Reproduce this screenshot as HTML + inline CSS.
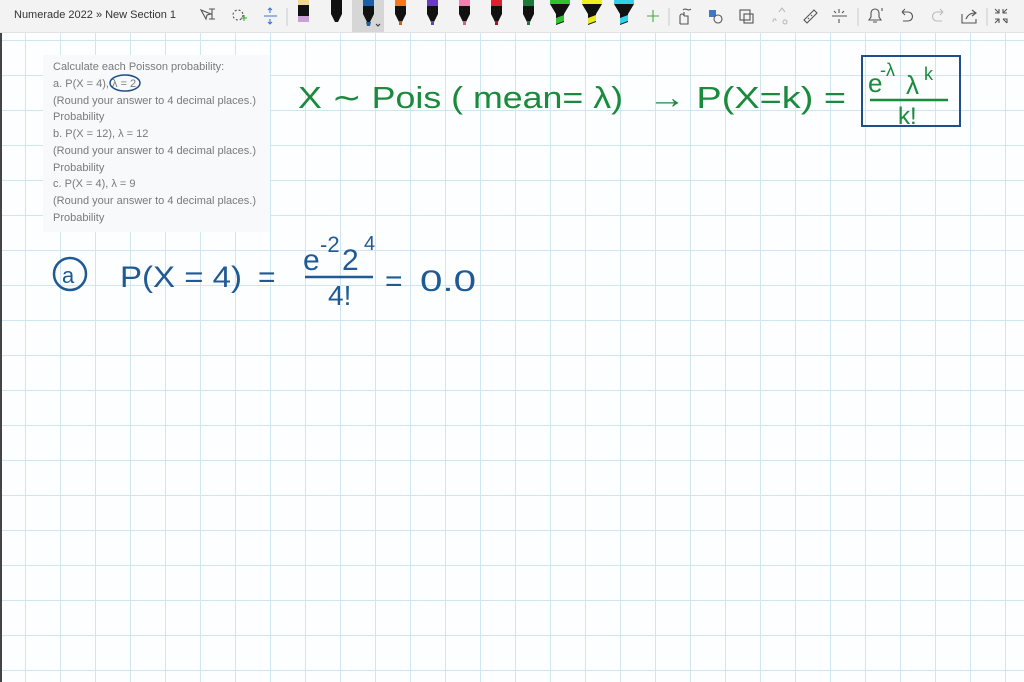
<!DOCTYPE html>
<html><head><meta charset="utf-8"><style>
html,body{margin:0;padding:0}
body{width:1024px;height:682px;overflow:hidden;position:relative;font-family:"Liberation Sans",sans-serif;
background-color:#fdfeff;
background-image:linear-gradient(to right,#cfe6f0 1px,transparent 1px),linear-gradient(to bottom,#cfe6f0 1px,transparent 1px);
background-size:35px 35px;background-position:25px 5px;}
#tb{position:absolute;left:0;top:0;width:1024px;height:32px;background:#f3f3f3;border-bottom:1px solid #e2e2e2}
#title{position:absolute;left:14px;top:9px;font-size:11px;color:#333}
#panel{position:absolute;left:43px;top:55px;width:227px;height:177px;background:#f8f9fb}
#panel div{position:absolute;left:10px;font-size:11px;color:#7a7a7a;white-space:nowrap}
#lb{position:absolute;left:0;top:32px;width:2px;height:650px;background:#444}
</style></head><body>
<div id="lb"></div>
<div id="tb">
<div id="title">Numerade 2022 » New Section 1</div>
<svg width="1024" height="32" style="position:absolute;left:0;top:0">
<g stroke="#555" fill="none" stroke-width="1.1">
<path d="M201 10l5 9 1-4 4-1z"/><path d="M209 9h6M212 9v10M209 19h6"/>
<circle cx="238" cy="15" r="5" stroke-dasharray="2 2"/>
<path d="M241 18h6M244 15v6" stroke="#3a3"/>
<path d="M264 16h13M270 8v5M268 10l2-2 2 2M270 24v-5M268 22l2 2 2-2" stroke="#3a78c8"/>
<path d="M287 8v18" stroke="#ccc"/>
</g>
<rect x="352" y="0" width="32" height="32" fill="#d6d6d6"/>
<g>
<rect x="298" y="0" width="11" height="6" fill="#f0d890"/><rect x="298" y="5" width="11" height="12" fill="#111"/><rect x="298" y="16" width="11" height="6" fill="#c9a0d8"/>
<path d="M331 0h11v14l-4 8h-3l-4-8z" fill="#111"/>
<path d="M363 0h11v6h-11z" fill="#1c5fa8"/><path d="M363 6h11v8l-4 8h-3l-4-8z" fill="#111"/><path d="M366 22h5l-1 4h-3z" fill="#1c5fa8"/><path d="M376 24l2 2 2-2" stroke="#333" fill="none"/>
<path d="M395 0h11v6h-11z" fill="#f07820"/><path d="M395 6h11v8l-4 8h-3l-4-8z" fill="#111"/><rect x="399" y="21" width="3" height="4" fill="#c86010"/>
<path d="M427 0h11v6h-11z" fill="#6a3ac0"/><path d="M427 6h11v8l-4 8h-3l-4-8z" fill="#111"/><rect x="431" y="21" width="3" height="4" fill="#6a3ac0"/>
<path d="M459 0h11v6h-11z" fill="#f080b0"/><path d="M459 6h11v8l-4 8h-3l-4-8z" fill="#111"/><rect x="463" y="21" width="3" height="4" fill="#d06090"/>
<path d="M491 0h11v6h-11z" fill="#e02030"/><path d="M491 6h11v8l-4 8h-3l-4-8z" fill="#111"/><rect x="495" y="21" width="3" height="4" fill="#b01020"/>
<path d="M523 0h11v6h-11z" fill="#1a7a3a"/><path d="M523 6h11v8l-4 8h-3l-4-8z" fill="#111"/><rect x="527" y="21" width="3" height="4" fill="#1a7a3a"/>
<path d="M550 0h20v4h-20z" fill="#30c030"/><path d="M550 4h20l-6 10v8l-8 3v-11z" fill="#111"/><path d="M556 18l8-3v6l-8 3z" fill="#30c030"/>
<path d="M582 0h20v4h-20z" fill="#f0f020"/><path d="M582 4h20l-6 10v8l-8 3v-11z" fill="#111"/><path d="M588 18l8-3v6l-8 3z" fill="#e8e820"/>
<path d="M614 0h20v4h-20z" fill="#30d0e8"/><path d="M614 4h20l-6 10v8l-8 3v-11z" fill="#111"/><path d="M620 18l8-3v6l-8 3z" fill="#30d0e8"/>
</g>
<g stroke="#555" fill="none" stroke-width="1.1">
<path d="M647 16h12M653 10v12" stroke="#4a4"/>
<path d="M669 8v18" stroke="#ccc"/>
<path d="M680 24v-8a2 2 0 014 0v-4M684 16h4v8h-8M683 10c3-3 5 2 8-1" />
<rect x="709" y="10" width="7" height="7" fill="#3a78c8" stroke="none"/><circle cx="718" cy="19" r="4" fill="#f3f3f3"/>
<rect x="740" y="10" width="10" height="10"/><rect x="744" y="14" width="9" height="9"/>
<path d="M773 22c0-4 3-4 3-1M779 12l3-4 3 4M783 22a2 2 0 100-.1" stroke="#bbb"/>
<path d="M804 20l10-10 3 3-10 10zM808 18l1 1M811 15l1 1"/>
<path d="M832 16h15M839 9v4M839 19v4M834 11l2 2M844 11l-2 2"/>
<path d="M858 8v18" stroke="#ccc"/>
<path d="M869 20h12l-2-3v-4a4 4 0 00-8 0v4zM873 22h4M882 8v3"/>
<path d="M902 12h6a4 4 0 010 9h-5M902 12l3-3M902 12l3 3"/>
<path d="M943 12h-6a4 4 0 000 9h5M943 12l-3-3M943 12l-3 3" stroke="#bbb"/>
<path d="M962 14v9h14v-4M966 19c2-5 6-6 9-6M972 10l4 3-4 3"/>
<path d="M987 8v18" stroke="#ccc"/>
<path d="M995 9l4 4M999 9v4h-4M1007 9l-4 4M1003 9v4h4M995 23l4-4M995 19h4v4M1007 23l-4-4M1003 19h4v4"/>
</g>
</svg>
</div>
<div id="panel">
<div style="top:6px">Calculate each Poisson probability:</div>
<div style="top:23px">a. P(X = 4), λ = 2</div>
<div style="top:40px">(Round your answer to 4 decimal places.)</div>
<div style="top:56px">Probability</div>
<div style="top:73px">b. P(X = 12), λ = 12</div>
<div style="top:90px">(Round your answer to 4 decimal places.)</div>
<div style="top:107px">Probability</div>
<div style="top:123px">c. P(X = 4), λ = 9</div>
<div style="top:140px">(Round your answer to 4 decimal places.)</div>
<div style="top:157px">Probability</div>
</div>
<svg width="1024" height="682" style="position:absolute;left:0;top:0" font-family="Liberation Sans, sans-serif">
<ellipse cx="125" cy="83" rx="15" ry="8" fill="none" stroke="#1f4f8a" stroke-width="1.5"/>
<g fill="#1a8a3c" font-size="31">
<text x="298" y="108" textLength="325" lengthAdjust="spacingAndGlyphs">X ∼ Pois ( mean= λ)</text>
<text x="648" y="108" textLength="198" lengthAdjust="spacingAndGlyphs">→ P(X=k) =</text>
</g>
<rect x="862" y="56" width="98" height="70" fill="none" stroke="#1f4f8a" stroke-width="2"/>
<g fill="#1a8a3c">
<text x="868" y="92" font-size="26">e</text><text x="880" y="76" font-size="18">-λ</text>
<text x="906" y="94" font-size="26">λ</text><text x="924" y="80" font-size="18">k</text>
<path d="M870 100h78" stroke="#1a8a3c" stroke-width="2.5"/>
<text x="898" y="124" font-size="24">k!</text>
</g>
<g fill="#1f5a94">
<circle cx="70" cy="274" r="16" fill="none" stroke="#1f5a94" stroke-width="2.5"/>
<text x="62" y="283" font-size="22">a</text>
<text x="120" y="287" font-size="30" textLength="122" lengthAdjust="spacingAndGlyphs">P(X = 4)</text>
<text x="258" y="287" font-size="30">=</text>
<text x="303" y="270" font-size="30">e</text><text x="320" y="252" font-size="22">-2</text>
<text x="342" y="270" font-size="30">2</text><text x="364" y="250" font-size="20">4</text>
<path d="M305 277h68" stroke="#1f5a94" stroke-width="2.5"/>
<text x="328" y="305" font-size="28">4!</text>
<text x="385" y="291" font-size="30">=</text>
<text x="420" y="291" font-size="30" textLength="56" lengthAdjust="spacingAndGlyphs">0.0</text>
</g>
</svg>
</body></html>
